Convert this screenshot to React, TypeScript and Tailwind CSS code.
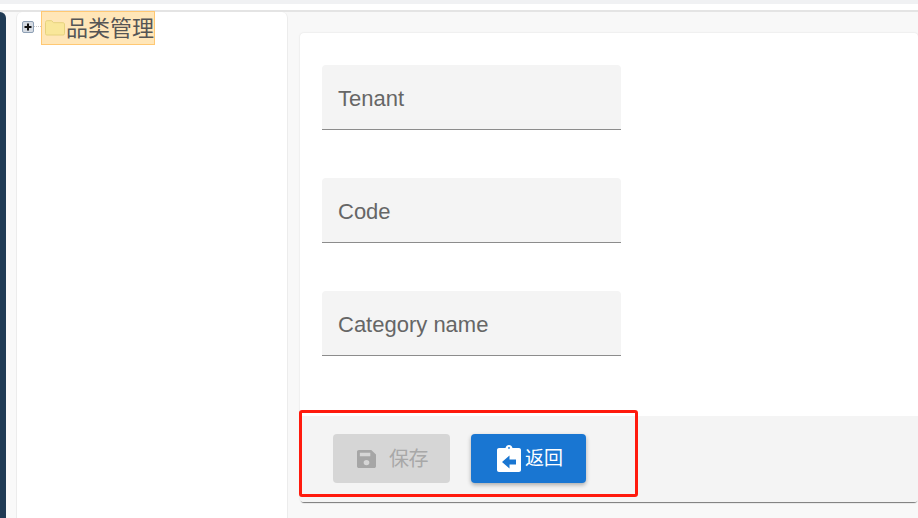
function Field({ label }: { label: string }) {
  return (
    <div className="w-[299px] h-[65px] bg-[#f4f4f4] rounded-t-[4px] border-b border-[#8c8c8c] flex items-center px-4 pt-[4px]">
      <span className="text-[22px] text-[#666666] leading-none">{label}</span>
    </div>
  );
}

function ClipboardBack() {
  return (
    <svg width="24" height="27" viewBox="0 0 24 27" className="shrink-0">
      <path
        fill="#ffffff"
        fillRule="evenodd"
        d="M2 3h6.500C8.900 1.200 10.300 0 12 0s3.100 1.200 3.500 3H22c1.100 0 2 .9 2 2v20c0 1.100-.9 2-2 2H2c-1.100 0-2-.9-2-2V5c0-1.100.9-2 2-2zM12 2a.9.9 0 1 0 0 1.800A.9.9 0 0 0 12 2z"
      />
      <path fill="#1976d2" d="M12.500 10.500 5 17l7.500 6.500v-4H19v-5h-6.500z" />
    </svg>
  );
}

export default function App() {
  return (
    <div className="relative w-[918px] h-[518px] overflow-hidden bg-white font-['Liberation_Sans','Noto_Sans_CJK_SC',sans-serif]">
      <div className="h-[4px] bg-[#f0f1f3]" />
      <div className="h-[6px] bg-white" />
      <div className="h-[508px] border-t-2 border-[#e4e4e4] flex bg-[#f8f8f8]">
        <div className="w-[6px] bg-[#1f3a54] rounded-tr-[6px] shrink-0" />
        <div className="w-[10px] bg-[#f9f9f9] shrink-0" />

        {/* tree */}
        <div className="w-[272px] shrink-0 bg-white rounded-t-[6px] border-x border-[#ececec] pl-[5px] flex items-start">
          <div className="flex items-center mt-[-1px]">
            <div className="w-[12px] h-[12px] mt-[-3px] rounded-[2px] border border-[#8ea0b5] bg-[#d5dbe3] flex items-center justify-center">
              <svg width="8" height="8" viewBox="0 0 8 8">
                <path fill="#111111" d="M3 0.500h2V3h2.500v2H5v2.500H3V5H0.500V3H3z" />
              </svg>
            </div>
            <div className="w-[7px] mt-[-3px] border-t border-dotted border-[#c8c8c8]" />
            <div className="h-[34px] w-[114px] bg-[#ffe6b8] border border-[#ffc873] flex items-center pl-[3px]">
              <svg width="20" height="16" viewBox="0 0 20 16" className="shrink-0">
                <path fill="#f9e79a" stroke="#e6d27e" strokeWidth="1" d="M0.500 2.500c0-1 .6-1.800 1.600-1.800h4.600l1.800 2h9.400c.8 0 1.600.6 1.600 1.300v9.700c0 .8-.6 1.300-1.300 1.300H1.800c-.8 0-1.300-.5-1.300-1.300z" />
              </svg>
              <span className="text-[22px] leading-none text-[#555555] whitespace-nowrap ml-[1px] mt-[2px]">品类管理</span>
            </div>
          </div>
        </div>

        {/* form */}
        <div className="flex-1 min-w-0 pl-[12px] pt-[21px] pb-[16px]">
          <div className="h-[469px] bg-white rounded-[4px] shadow-[0_2px_1px_-1px_rgba(0,0,0,0.5),0_0_2px_rgba(0,0,0,0.12)] flex flex-col overflow-hidden">
            <div className="flex-1 pl-[22px] pt-[32px] flex flex-col gap-[48px]">
              <Field label="Tenant" />
              <Field label="Code" />
              <Field label="Category name" />
            </div>
            <div className="h-[86px] bg-[#f4f4f4] pl-[33px] pt-[18px] flex items-start gap-[21px]">
              <div className="w-[117px] h-[49px] rounded-[4px] bg-[#d6d6d6] flex items-center pl-[24px] gap-[13px]">
                <svg width="19" height="18" viewBox="0 0 20 20" preserveAspectRatio="none" className="shrink-0">
                  <path fill="#a6a6a6" fillRule="evenodd" d="M2 0h13l5 5v13c0 1.100-.9 2-2 2H2c-1.100 0-2-.9-2-2V2C0 .9.900 0 2 0zm1 3v4h11V3zm7 8a3 3 0 1 0 0 6 3 3 0 0 0 0-6z" />
                </svg>
                <span className="text-[20px] text-[#a8a8a8] leading-none tracking-[-0.5px]">保存</span>
              </div>
              <div className="w-[115px] h-[49px] rounded-[4px] bg-[#1976d2] shadow-[0_2px_4px_rgba(0,0,0,0.3)] flex items-center pl-[26px] gap-[4px]">
                <ClipboardBack />
                <span className="text-[19px] text-white leading-none">返回</span>
              </div>
            </div>
          </div>
        </div>
      </div>

      {/* annotation box */}
      <div className="absolute left-[299px] top-[410px] w-[339px] h-[87px] border-[3px] border-[#ff1a0d] rounded-[3px]" />
    </div>
  );
}
